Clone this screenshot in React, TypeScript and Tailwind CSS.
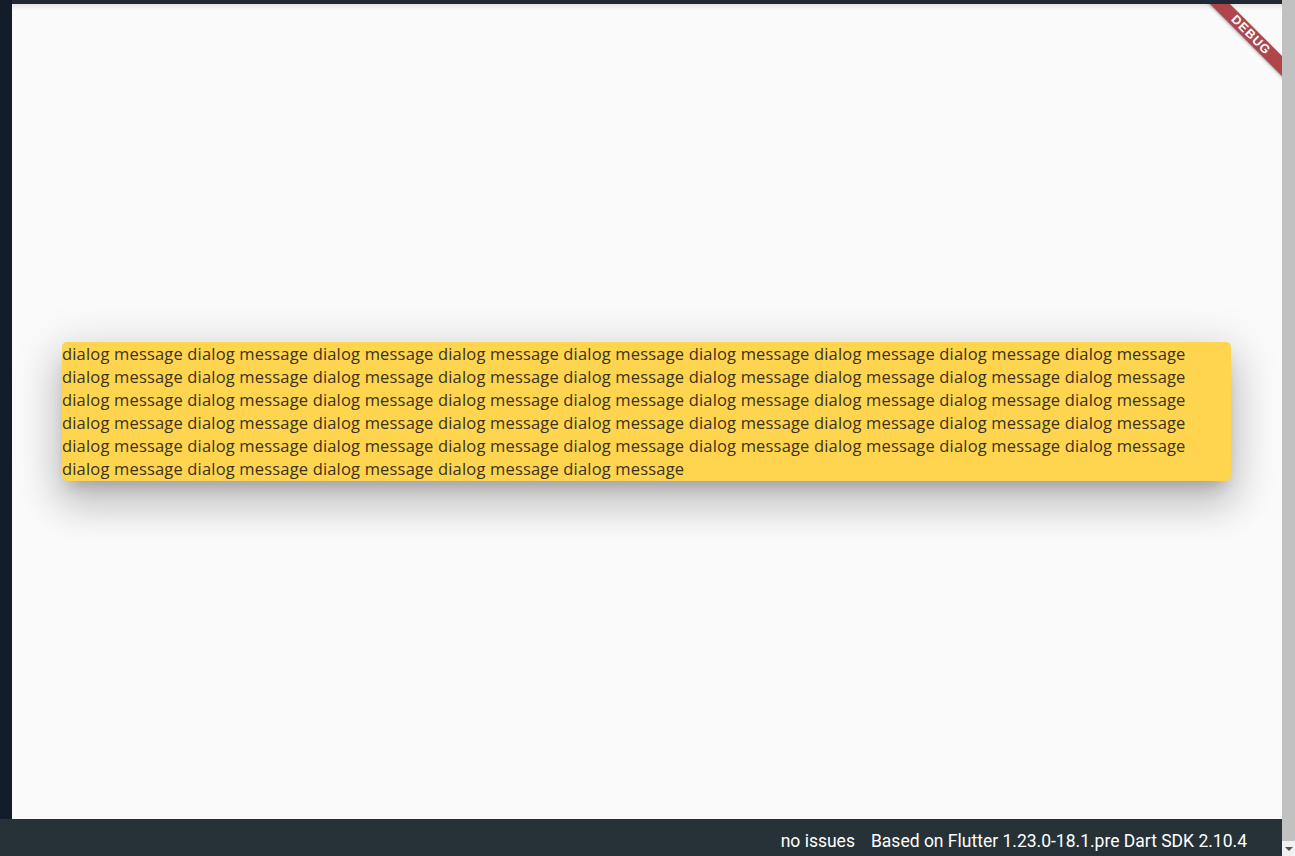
import React from "react";

const msg = Array.from({ length: 50 }, () => "dialog message").join(" ");

export default function App() {
  return (
    <div className="flex h-[856px] w-[1295px] overflow-hidden bg-[#fafafa]">
      <div className="flex w-[1282px] flex-col">
        <div className="flex flex-1">
          <div className="w-[12px] bg-[#131c2a]" />
          <div className="relative flex flex-1 flex-col overflow-hidden bg-[#fafafa]">
            <div className="h-[4px] bg-[#1f2833]" />
            <div className="h-[6px] bg-gradient-to-b from-[#e4e4e4] to-[#fafafa]" />
            <div className="flex flex-1 items-center justify-center pl-[50px] pr-[51px] pb-[7px]">
              <div
                className="w-full rounded-[5px] bg-[#ffd54f] pb-[1px] text-[16.5px] leading-[23px] tracking-[0.175px] text-[#3a3220] shadow-[0_11px_15px_-7px_rgba(0,0,0,0.2),0_24px_38px_3px_rgba(0,0,0,0.14),0_9px_46px_8px_rgba(0,0,0,0.12)]"
                style={{ fontFamily: '"Segoe UI", "Open Sans", sans-serif' }}
              >
                {msg}
              </div>
            </div>
            <div className="pointer-events-none absolute right-0 top-[4px] h-[100px] w-[100px] overflow-hidden">
              <div
                className="absolute left-[-11px] top-[24px] flex h-[14px] w-[160px] rotate-45 items-center justify-center bg-[#a0262b]/85 text-[12.5px] font-black uppercase leading-none tracking-[1px] text-white shadow-[0_1px_3px_rgba(0,0,0,0.35)]"
                style={{ fontFamily: '"Liberation Sans", Arial, sans-serif' }}
              >
                DEBUG
              </div>
            </div>
          </div>
        </div>
        <div
          className="flex h-[37px] items-center justify-end gap-[16px] bg-[#263238] pr-[35px] pt-[8px] text-[17.5px] text-white"
          style={{ fontFamily: 'Roboto, "Liberation Sans", sans-serif' }}
        >
          <span>no issues</span>
          <span>Based on Flutter 1.23.0-18.1.pre Dart SDK 2.10.4</span>
        </div>
      </div>
      <div className="flex w-[13px] flex-col bg-[#f1f1f1]">
        <div className="flex-1 bg-[#c1c1c1]" />
        <div className="flex h-[15px] items-center justify-center">
          <div className="h-0 w-0 border-x-[4px] border-t-[4px] border-x-transparent border-t-[#505050]" />
        </div>
      </div>
    </div>
  );
}
